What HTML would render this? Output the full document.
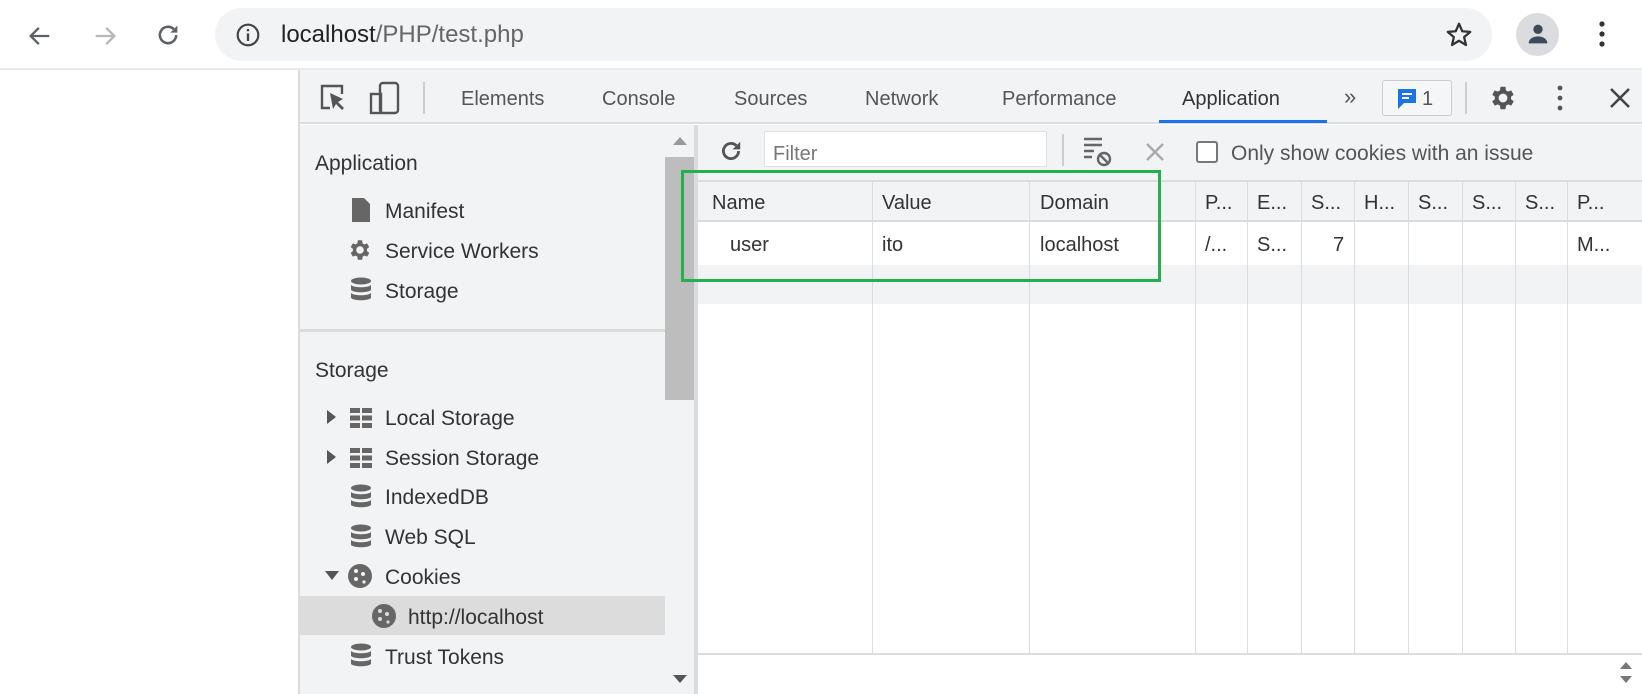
<!DOCTYPE html>
<html><head><meta charset="utf-8"><style>
*{margin:0;padding:0;box-sizing:border-box}
body{width:1642px;height:694px;overflow:hidden;background:#fff;font-family:"Liberation Sans",sans-serif;color:#333;position:relative}
.a{position:absolute;white-space:nowrap}
.t{font-size:20px;color:#555}
.s{font-size:21px;color:#333}
.col{position:absolute;top:180px;width:1px;height:474px;background:#dadce0}
.h{font-size:20px;color:#333;top:192px}
.c{font-size:20px;color:#333;top:234px}
</style></head><body>
<!-- top bar -->
<div class="a" style="left:0;top:68px;width:1642px;height:2px;background:#e8eaed"></div>
<svg class="a" style="left:26px;top:22px" width="28" height="28" viewBox="0 0 24 24"><path d="M20 12H5M11 5l-7 7 7 7" fill="none" stroke="#5f6368" stroke-width="2"/></svg>
<svg class="a" style="left:91px;top:22px" width="28" height="28" viewBox="0 0 24 24"><path d="M4 12h15M13 5l7 7-7 7" fill="none" stroke="#b5b8bb" stroke-width="2"/></svg>
<svg class="a" style="left:154px;top:21px" width="28" height="28" viewBox="0 0 24 24"><path d="M19 12a7 7 0 1 1-2.1-5" fill="none" stroke="#5f6368" stroke-width="2.2"/><path d="M20 4v6h-6z" fill="#5f6368"/></svg>
<div class="a" style="left:215px;top:8px;width:1277px;height:53px;border-radius:27px;background:#f1f3f4"></div>
<svg class="a" style="left:235px;top:22px" width="26" height="26" viewBox="0 0 24 24"><circle cx="12" cy="12" r="9.5" fill="none" stroke="#444" stroke-width="2"/><path d="M12 10.5v7M12 6.5v2" stroke="#444" stroke-width="2.2"/></svg>
<div class="a" style="left:281px;top:21px;font-size:24px;color:#222">localhost<span style="color:#666">/PHP/test.php</span></div>
<svg class="a" style="left:1444px;top:20px" width="30" height="30" viewBox="0 0 24 24"><path d="M12 3l2.6 6 6.4.5-4.9 4.2 1.5 6.3L12 16.6 6.4 20l1.5-6.3L3 9.5l6.4-.5z" fill="none" stroke="#333" stroke-width="1.8" stroke-linejoin="round"/></svg>
<div class="a" style="left:1516px;top:13px;width:43px;height:43px;border-radius:50%;background:#dadce0"></div>
<svg class="a" style="left:1524px;top:20px" width="28" height="28" viewBox="0 0 24 24"><circle cx="12" cy="8" r="4" fill="#3c4a5a"/><path d="M4 20c0-4 4-6 8-6s8 2 8 6z" fill="#3c4a5a"/></svg>
<svg class="a" style="left:1595px;top:18px" width="14" height="32" viewBox="0 0 14 32"><circle cx="7" cy="6" r="2.6" fill="#333"/><circle cx="7" cy="16" r="2.6" fill="#333"/><circle cx="7" cy="26" r="2.6" fill="#333"/></svg>

<!-- devtools -->
<div class="a" style="left:298px;top:70px;width:1344px;height:624px;background:#fff;border-left:2px solid #dadce0"></div>
<div class="a" style="left:300px;top:70px;width:1342px;height:54px;background:#f1f3f4;border-bottom:2px solid #dadce0"></div>
<svg class="a" style="left:318px;top:82px" width="30" height="32" viewBox="0 0 30 32"><path d="M12 26H4V4h20v8" fill="none" stroke="#555" stroke-width="2.4"/><path d="M12 11l3 16 3-5 6 6 2-2-6-6 5-3z" fill="#555"/></svg>
<svg class="a" style="left:368px;top:80px" width="34" height="36" viewBox="0 0 34 36"><rect x="12" y="3" width="18" height="30" rx="3" fill="none" stroke="#555" stroke-width="2.4"/><rect x="3" y="14" width="10" height="19" fill="none" stroke="#555" stroke-width="2.4"/></svg>
<div class="a" style="left:423px;top:82px;width:2px;height:32px;background:#ccc"></div>
<div class="a t" style="left:461px;top:88px">Elements</div>
<div class="a t" style="left:602px;top:88px">Console</div>
<div class="a t" style="left:734px;top:88px">Sources</div>
<div class="a t" style="left:865px;top:88px">Network</div>
<div class="a t" style="left:1002px;top:88px">Performance</div>
<div class="a t" style="left:1182px;top:88px;color:#333">Application</div>
<div class="a" style="left:1159px;top:120px;width:168px;height:3px;background:#1a73e8"></div>
<div class="a t" style="left:1344px;top:84px;font-size:22px">»</div>
<div class="a" style="left:1382px;top:80px;width:70px;height:36px;border:1.5px solid #ccc;border-radius:3px;background:#f5f6f7"></div>
<svg class="a" style="left:1396px;top:87px" width="22" height="24" viewBox="0 0 22 24"><path d="M2 2h18v14H8l-6 6z" fill="#1a73e8"/><path d="M6 7h10M6 11h7" stroke="#fff" stroke-width="2"/></svg>
<div class="a t" style="left:1422px;top:88px">1</div>
<div class="a" style="left:1465px;top:82px;width:2px;height:32px;background:#ccc"></div>
<svg class="a" style="left:1488px;top:83px" width="30" height="30" viewBox="0 0 24 24"><path d="M19.4 13a7.5 7.5 0 0 0 0-2l2.1-1.6-2-3.5-2.5 1a7 7 0 0 0-1.7-1L15 3h-4l-.4 2.9a7 7 0 0 0-1.7 1l-2.5-1-2 3.5L6.5 11a7.5 7.5 0 0 0 0 2l-2.1 1.6 2 3.5 2.5-1a7 7 0 0 0 1.7 1L11 21h4l.4-2.9a7 7 0 0 0 1.7-1l2.5 1 2-3.5zM13 15.5a3.5 3.5 0 1 1 0-7 3.5 3.5 0 0 1 0 7z" fill="#555" transform="translate(-1 0)"/></svg>
<svg class="a" style="left:1553px;top:83px" width="14" height="30" viewBox="0 0 14 30"><circle cx="7" cy="5" r="2.4" fill="#555"/><circle cx="7" cy="15" r="2.4" fill="#555"/><circle cx="7" cy="25" r="2.4" fill="#555"/></svg>
<svg class="a" style="left:1608px;top:86px" width="24" height="24" viewBox="0 0 24 24"><path d="M3 3l18 18M21 3L3 21" stroke="#444" stroke-width="2.6"/></svg>

<!-- sidebar -->
<div class="a" style="left:300px;top:125px;width:398px;height:569px;background:#f1f3f4"></div>
<div class="a" style="left:665px;top:157px;width:29px;height:243px;background:#bdbdbd"></div>
<div class="a" style="left:673px;top:137px;width:0;height:0;border-left:7px solid transparent;border-right:7px solid transparent;border-bottom:8px solid #999"></div>
<div class="a" style="left:673px;top:675px;width:0;height:0;border-left:7px solid transparent;border-right:7px solid transparent;border-top:8px solid #555"></div>
<div class="a" style="left:694px;top:125px;width:4px;height:569px;background:#dadce0"></div>
<div class="a" style="left:300px;top:329px;width:365px;height:3px;background:#dcdcdc"></div>
<div class="a" style="left:300px;top:596px;width:365px;height:39px;background:#dcdcdc"></div>
<div class="a s" style="left:315px;top:152px">Application</div>
<div class="a s" style="left:385px;top:200px">Manifest</div>
<div class="a s" style="left:385px;top:240px">Service Workers</div>
<div class="a s" style="left:385px;top:280px">Storage</div>
<div class="a s" style="left:315px;top:359px">Storage</div>
<div class="a s" style="left:385px;top:407px">Local Storage</div>
<div class="a s" style="left:385px;top:447px">Session Storage</div>
<div class="a s" style="left:385px;top:486px">IndexedDB</div>
<div class="a s" style="left:385px;top:526px">Web SQL</div>
<div class="a s" style="left:385px;top:566px">Cookies</div>
<div class="a s" style="left:408px;top:606px">http://localhost</div>
<div class="a s" style="left:385px;top:646px">Trust Tokens</div>
<!-- icons -->
<svg class="a" style="left:350px;top:197px" width="22" height="26" viewBox="0 0 22 26"><path d="M2 1h12l6 6v18H2z" fill="#666"/></svg>
<svg class="a" style="left:347px;top:237px" width="26" height="26" viewBox="0 0 24 24"><path d="M19.4 13a7.5 7.5 0 0 0 0-2l2.1-1.6-2-3.5-2.5 1a7 7 0 0 0-1.7-1L15 3h-4l-.4 2.9a7 7 0 0 0-1.7 1l-2.5-1-2 3.5L6.5 11a7.5 7.5 0 0 0 0 2l-2.1 1.6 2 3.5 2.5-1a7 7 0 0 0 1.7 1L11 21h4l.4-2.9a7 7 0 0 0 1.7-1l2.5 1 2-3.5zM13 15.5a3.5 3.5 0 1 1 0-7 3.5 3.5 0 0 1 0 7z" fill="#666" transform="translate(-1 0)"/></svg>
<svg class="a" style="left:349px;top:277px;" width="24" height="26" viewBox="0 0 24 26"><g fill="#666"><ellipse cx="12" cy="4" rx="10" ry="3.5"/><path d="M2 8c3 3 17 3 20 0v5c-3 3-17 3-20 0z"/><path d="M2 16c3 3 17 3 20 0v5c-3 3-17 3-20 0z"/></g></svg>
<svg class="a" style="left:349px;top:484px;" width="24" height="26" viewBox="0 0 24 26"><g fill="#666"><ellipse cx="12" cy="4" rx="10" ry="3.5"/><path d="M2 8c3 3 17 3 20 0v5c-3 3-17 3-20 0z"/><path d="M2 16c3 3 17 3 20 0v5c-3 3-17 3-20 0z"/></g></svg>
<svg class="a" style="left:349px;top:524px;" width="24" height="26" viewBox="0 0 24 26"><g fill="#666"><ellipse cx="12" cy="4" rx="10" ry="3.5"/><path d="M2 8c3 3 17 3 20 0v5c-3 3-17 3-20 0z"/><path d="M2 16c3 3 17 3 20 0v5c-3 3-17 3-20 0z"/></g></svg>
<svg class="a" style="left:349px;top:643px;" width="24" height="26" viewBox="0 0 24 26"><g fill="#666"><ellipse cx="12" cy="4" rx="10" ry="3.5"/><path d="M2 8c3 3 17 3 20 0v5c-3 3-17 3-20 0z"/><path d="M2 16c3 3 17 3 20 0v5c-3 3-17 3-20 0z"/></g></svg>
<svg class="a" style="left:349px;top:407px" width="24" height="22" viewBox="0 0 24 22"><g fill="#666"><rect x="1" y="1" width="10" height="5"/><rect x="13" y="1" width="10" height="5"/><rect x="1" y="8.5" width="10" height="5"/><rect x="13" y="8.5" width="10" height="5"/><rect x="1" y="16" width="10" height="5"/><rect x="13" y="16" width="10" height="5"/></g></svg>
<svg class="a" style="left:349px;top:447px" width="24" height="22" viewBox="0 0 24 22"><g fill="#666"><rect x="1" y="1" width="10" height="5"/><rect x="13" y="1" width="10" height="5"/><rect x="1" y="8.5" width="10" height="5"/><rect x="13" y="8.5" width="10" height="5"/><rect x="1" y="16" width="10" height="5"/><rect x="13" y="16" width="10" height="5"/></g></svg>
<div class="a" style="left:327px;top:410px;border-top:7px solid transparent;border-bottom:7px solid transparent;border-left:9px solid #555"></div>
<div class="a" style="left:327px;top:450px;border-top:7px solid transparent;border-bottom:7px solid transparent;border-left:9px solid #555"></div>
<div class="a" style="left:325px;top:571px;border-left:7px solid transparent;border-right:7px solid transparent;border-top:9px solid #555"></div>
<svg class="a" style="left:347px;top:563px" width="26" height="26" viewBox="0 0 26 26"><circle cx="13" cy="13" r="12" fill="#666"/><g fill="#f1f3f4"><circle cx="9" cy="8" r="2"/><circle cx="16" cy="11" r="2"/><circle cx="9" cy="16" r="2"/><circle cx="17" cy="19" r="1.6"/></g></svg>
<svg class="a" style="left:371px;top:603px" width="26" height="26" viewBox="0 0 26 26"><circle cx="13" cy="13" r="12" fill="#666"/><g fill="#dcdcdc"><circle cx="9" cy="8" r="2"/><circle cx="16" cy="11" r="2"/><circle cx="9" cy="16" r="2"/><circle cx="17" cy="19" r="1.6"/></g></svg>

<!-- right panel toolbar -->
<div class="a" style="left:698px;top:125px;width:944px;height:55px;background:#f1f3f4"></div>
<svg class="a" style="left:718px;top:138px" width="26" height="26" viewBox="0 0 24 24"><path d="M19 12a7 7 0 1 1-2.1-5" fill="none" stroke="#555" stroke-width="2.6"/><path d="M20.5 3.5v7h-7z" fill="#555"/></svg>
<div class="a" style="left:764px;top:131px;width:283px;height:36px;background:#fff;border:1px solid #e0e0e0"></div>
<div class="a" style="left:773px;top:143px;font-size:20px;color:#777">Filter</div>
<div class="a" style="left:1062px;top:134px;width:2px;height:32px;background:#ccc"></div>
<svg class="a" style="left:1082px;top:135px" width="32" height="32" viewBox="0 0 32 32"><path d="M2 4h18M2 10h18M2 16h10M2 22h8" stroke="#666" stroke-width="2.6"/><circle cx="22" cy="24" r="6" fill="none" stroke="#666" stroke-width="2.4"/><path d="M18 20l8 8" stroke="#666" stroke-width="2.4"/></svg>
<svg class="a" style="left:1144px;top:141px" width="22" height="22" viewBox="0 0 22 22"><path d="M3 3l16 16M19 3L3 19" stroke="#aaa" stroke-width="2.4"/></svg>
<div class="a" style="left:1196px;top:141px;width:22px;height:22px;border:2px solid #777;border-radius:3px;background:#fff"></div>
<div class="a" style="left:1231px;top:142px;font-size:21px;color:#555">Only show cookies with an issue</div>

<!-- table -->
<div class="a" style="left:698px;top:180px;width:944px;height:42px;background:#f1f3f4;border-top:2px solid #dadce0;border-bottom:2px solid #dadce0"></div>
<div class="a" style="left:698px;top:265px;width:944px;height:39px;background:#f1f3f4"></div>
<div class="a" style="left:698px;top:653px;width:944px;height:2px;background:#dadce0"></div>
<div class="col" style="left:872px"></div><div class="col" style="left:1029px"></div><div class="col" style="left:1195px"></div><div class="col" style="left:1247px"></div><div class="col" style="left:1301px"></div><div class="col" style="left:1354px"></div><div class="col" style="left:1408px"></div><div class="col" style="left:1462px"></div><div class="col" style="left:1515px"></div><div class="col" style="left:1567px"></div>
<div class="a h" style="left:712px">Name</div><div class="a h" style="left:882px">Value</div><div class="a h" style="left:1040px">Domain</div>
<div class="a h" style="left:1205px">P...</div><div class="a h" style="left:1257px">E...</div><div class="a h" style="left:1311px">S...</div><div class="a h" style="left:1364px">H...</div><div class="a h" style="left:1418px">S...</div><div class="a h" style="left:1472px">S...</div><div class="a h" style="left:1525px">S...</div><div class="a h" style="left:1577px">P...</div>
<div class="a c" style="left:730px">user</div><div class="a c" style="left:882px">ito</div><div class="a c" style="left:1040px">localhost</div>
<div class="a c" style="left:1205px">/...</div><div class="a c" style="left:1257px">S...</div><div class="a c" style="left:1333px">7</div><div class="a c" style="left:1577px">M...</div>
<div class="a" style="left:681px;top:170px;width:480px;height:112px;border:3px solid #22b14c"></div>
<div class="a" style="left:1620px;top:662px;border-left:6px solid transparent;border-right:6px solid transparent;border-bottom:7px solid #777"></div>
<div class="a" style="left:1620px;top:676px;border-left:6px solid transparent;border-right:6px solid transparent;border-top:7px solid #777"></div>
</body></html>
